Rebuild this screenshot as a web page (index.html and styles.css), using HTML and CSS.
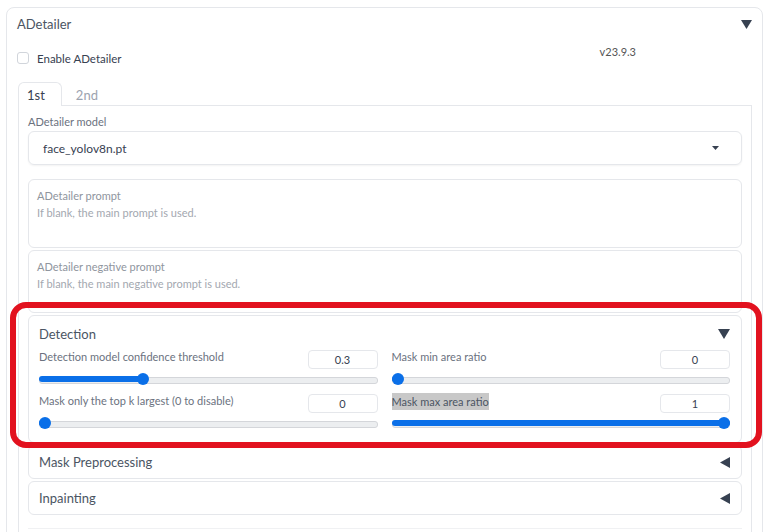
FILE: index.html
```html
<!DOCTYPE html>
<html lang="en">
<head>
    <meta charset="UTF-8">
    <meta name="viewport" content="width=device-width, initial-scale=1.0">
    <title>ADetailer</title>
    <link rel="stylesheet" href="styles.css">
</head>
<body>
    <div class="panel">
        <div class="panel-head">
            <span class="panel-title">ADetailer</span>
            <svg class="caret" width="11" height="9" viewBox="0 0 11 9"><path d="M0 0H11L5.5 9Z" fill="#374151"/></svg>
        </div>

        <div class="enable-row">
            <label class="check">
                <span class="check-box"></span>
                <span class="check-label">Enable ADetailer</span>
            </label>
            <span class="version">v23.9.3</span>
        </div>

        <div class="tabs">
            <div class="tab-nav">
                <button class="tab active">1st</button>
                <button class="tab">2nd</button>
            </div>
            <div class="tab-body">
                <div class="field-label">ADetailer model</div>
                <div class="select">
                    <span>face_yolov8n.pt</span>
                    <svg width="7" height="4" viewBox="0 0 7 4"><path d="M0 0H7L3.5 4Z" fill="#374151"/></svg>
                </div>

                <div class="prompt first">
                    <div class="prompt-label">ADetailer prompt</div>
                    <div class="prompt-hint">If blank, the main prompt is used.</div>
                </div>
                <div class="prompt">
                    <div class="prompt-label">ADetailer negative prompt</div>
                    <div class="prompt-hint">If blank, the main negative prompt is used.</div>
                </div>

                <div class="accordion open">
                    <div class="acc-head">
                        <span>Detection</span>
                        <svg width="12" height="10" viewBox="0 0 12 10"><path d="M0 0H12L6 10Z" fill="#374151"/></svg>
                    </div>
                    <div class="slider-grid">
                        <div class="slider-field">
                            <div class="slider-top">
                                <span class="slider-name">Detection model confidence threshold</span>
                                <span class="num">0.3</span>
                            </div>
                            <div class="range">
                                <div class="fill" style="width: calc(6px + 0.3 * (100% - 12px))"></div>
                                <div class="thumb" style="left: calc(0.3 * (100% - 12px))"></div>
                            </div>
                        </div>
                        <div class="slider-field">
                            <div class="slider-top">
                                <span class="slider-name">Mask min area ratio</span>
                                <span class="num">0</span>
                            </div>
                            <div class="range">
                                <div class="fill" style="width: 6px"></div>
                                <div class="thumb" style="left: 0"></div>
                            </div>
                        </div>
                        <div class="slider-field">
                            <div class="slider-top">
                                <span class="slider-name">Mask only the top k largest (0 to disable)</span>
                                <span class="num">0</span>
                            </div>
                            <div class="range">
                                <div class="fill" style="width: 6px"></div>
                                <div class="thumb" style="left: 0"></div>
                            </div>
                        </div>
                        <div class="slider-field">
                            <div class="slider-top">
                                <span class="slider-name selected">Mask max area ratio</span>
                                <span class="num">1</span>
                            </div>
                            <div class="range">
                                <div class="fill" style="width: 100%"></div>
                                <div class="thumb" style="left: calc(100% - 12px)"></div>
                            </div>
                        </div>
                    </div>
                </div>

                <div class="accordion">
                    <div class="acc-head">
                        <span>Mask Preprocessing</span>
                        <svg width="10" height="11" viewBox="0 0 10 11"><path d="M10 0V11L0 5.5Z" fill="#374151"/></svg>
                    </div>
                </div>
                <div class="accordion">
                    <div class="acc-head">
                        <span>Inpainting</span>
                        <svg width="10" height="11" viewBox="0 0 10 11"><path d="M10 0V11L0 5.5Z" fill="#374151"/></svg>
                    </div>
                </div>
                <div class="next-block"></div>
            </div>
        </div>
    </div>

    <!-- annotation drawn over the Detection block -->
    <div class="highlight"></div>
</body>
</html>
```

FILE: styles.css
```css
* {
    box-sizing: border-box;
}

html, body {
    height: 532px;
    overflow: hidden;
}

body {
    font-family: Lato, "Noto Sans", sans-serif;
    background: white;
    margin: 0;
    padding: 7px 5px 0 6px;
    position: relative;
    color: #374151;
}

.panel {
    border: 1px solid #e5e7eb;
    border-radius: 8px;
    padding: 8px 10px 0 10px;
    height: 600px;
}

.panel-head {
    display: flex;
    justify-content: space-between;
    align-items: center;
    height: 16px;
}

.panel-title {
    font-size: 13px;
    color: #4b5563;
}

.enable-row {
    display: flex;
    align-items: center;
    margin-top: 18px;
    height: 16px;
}

.check {
    display: flex;
    align-items: center;
    gap: 8px;
}

.check-box {
    width: 12px;
    height: 12px;
    border: 1px solid #d1d5db;
    border-radius: 3px;
    background: white;
}

.check-label {
    font-size: 11.5px;
    color: #374151;
}

.version {
    margin-left: auto;
    margin-right: 116px;
    margin-bottom: 14px;
    font-size: 11px;
    color: #555;
}

.tabs {
    margin-top: 16px;
    margin-left: 1px;
}

.tab-nav {
    display: flex;
    height: 24px;
}

.tab {
    font-family: inherit;
    font-size: 13px;
    color: #9ca3af;
    background: none;
    border: 1px solid transparent;
    border-bottom: none;
    border-radius: 6px 6px 0 0;
    padding: 0 13px;
    margin: 0;
    cursor: pointer;
    position: relative;
}

.tab.active {
    color: #374151;
    background: white;
    border-color: #e5e7eb;
    padding: 0 16px 0 8px;
    z-index: 1;
}

.tab-body {
    border: 1px solid #e5e7eb;
    margin-top: -1px;
    padding: 9px 9px 0 9px;
    height: 500px;
}

.field-label {
    font-size: 11px;
    line-height: 14px;
    color: #6b7280;
    margin-bottom: 2px;
}

.select {
    height: 34px;
    border: 1px solid #e5e7eb;
    border-radius: 6px;
    box-shadow: 0 1px 2px rgba(0, 0, 0, 0.05);
    display: flex;
    align-items: center;
    justify-content: space-between;
    padding: 0 22px 0 14px;
    font-size: 12px;
    color: #374151;
}

.prompt {
    border: 1px solid #e5e7eb;
    border-radius: 6px;
    padding: 9px 8px;
    margin-top: 2px;
    height: 63px;
}

.prompt.first {
    margin-top: 14px;
    height: 69px;
}

.prompt-label {
    font-size: 11px;
    line-height: 14px;
    color: #8f959e;
}

.prompt-hint {
    font-size: 11px;
    line-height: 14px;
    color: #a3a8b0;
    margin-top: 3px;
}

.accordion {
    border: 1px solid #e5e7eb;
    border-radius: 6px;
    padding: 8px 11px 8px 10px;
    margin-top: 2px;
}

.accordion.open {
    padding-top: 10px;
    padding-bottom: 12px;
}

.acc-head {
    display: flex;
    justify-content: space-between;
    align-items: center;
    height: 16px;
    font-size: 13px;
    color: #4b5563;
}

.slider-grid {
    display: grid;
    grid-template-columns: 1fr 1fr;
    column-gap: 14px;
    margin-top: 7px;
}

.slider-field {
    display: flex;
    flex-direction: column;
}

.slider-field:nth-child(n+3) {
    margin-top: 7px;
}

.slider-top {
    display: flex;
    justify-content: space-between;
    align-items: flex-start;
}

.slider-name {
    font-size: 11px;
    line-height: 16px;
    color: #6b7280;
}

.slider-name.selected {
    background: #c8c8c8;
    color: #4b5563;
    line-height: 17px;
}

.num {
    width: 70px;
    height: 19px;
    margin-top: 1px;
    border: 1px solid #e5e7eb;
    border-radius: 4px;
    font-size: 11px;
    line-height: 17px;
    text-align: center;
    color: #374151;
}

.range {
    position: relative;
    height: 14px;
    margin-top: 3px;
}

.range::before {
    content: "";
    position: absolute;
    left: 0;
    right: 0;
    top: 5px;
    height: 5px;
    border: 1px solid #d4d6da;
    border-radius: 3px;
    background: #eceef0;
}

.fill {
    position: absolute;
    left: 0;
    top: 4px;
    height: 6px;
    border-radius: 3px;
    background: #0a6fe8;
}

.thumb {
    position: absolute;
    top: 1px;
    width: 12px;
    height: 12px;
    border-radius: 50%;
    background: #0a6fe8;
}

.next-block {
    margin-top: 13px;
    border-top: 1px solid #f0f1f3;
}

.highlight {
    position: absolute;
    left: 10px;
    top: 302px;
    width: 752px;
    height: 146px;
    border: 6px solid #e2121f;
    border-radius: 16px;
    pointer-events: none;
}
```
